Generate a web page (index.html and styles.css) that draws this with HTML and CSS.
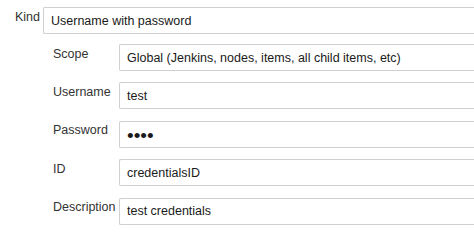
FILE: index.html
```html
<!DOCTYPE html>
<html lang="en">
<head>
  <meta charset="UTF-8" />
  <title>Credentials</title>
  <link rel="stylesheet" href="styles.css">
</head>
<body>

  <div class="form">
    <div class="row kind-row">
      <label class="label kind-label">Kind</label>
      <input class="field" type="text" value="Username with password">
    </div>

    <div class="sub">
      <div class="row">
        <label class="label">Scope</label>
        <input class="field" type="text" value="Global (Jenkins, nodes, items, all child items, etc)">
      </div>
      <div class="row">
        <label class="label">Username</label>
        <input class="field" type="text" value="test">
      </div>
      <div class="row">
        <label class="label">Password</label>
        <input class="field password" type="password" value="test">
      </div>
      <div class="row">
        <label class="label">ID</label>
        <input class="field" type="text" value="credentialsID">
      </div>
      <div class="row">
        <label class="label">Description</label>
        <input class="field" type="text" value="test credentials">
      </div>
    </div>
  </div>

</body>
</html>
```

FILE: styles.css
```css
body {
  margin: 0;
  font-family: 'Liberation Sans', Arial, sans-serif;
  font-size: 12.5px;
  color: #333;
  background: #fff;
}
.form {
  padding-top: 7px;
}
.row {
  display: flex;
  align-items: flex-start;
}
.kind-row {
  padding-left: 15px;
}
.label {
  width: 66px;
  flex-shrink: 0;
  padding-top: 2.5px;
  color: #333;
}
.kind-label {
  width: 28px;
}
.sub {
  margin-left: 53px;
  margin-top: 10px;
  display: flex;
  flex-direction: column;
  gap: 11.4px;
}
/* fields run on past the right edge of the window */
.field {
  flex: 1;
  min-width: 0;
  box-sizing: border-box;
  height: 27px;
  margin: 0;
  padding: 0 7px;
  border: 1px solid #d0d0d0;
  border-right: none;
  border-radius: 2px 0 0 2px;
  font-family: inherit;
  font-size: 12.5px;
  color: #1a1a1a;
  background: #fff;
  outline: none;
}
.password {
  font-size: 19px;
  padding-top: 3px;
}
```
